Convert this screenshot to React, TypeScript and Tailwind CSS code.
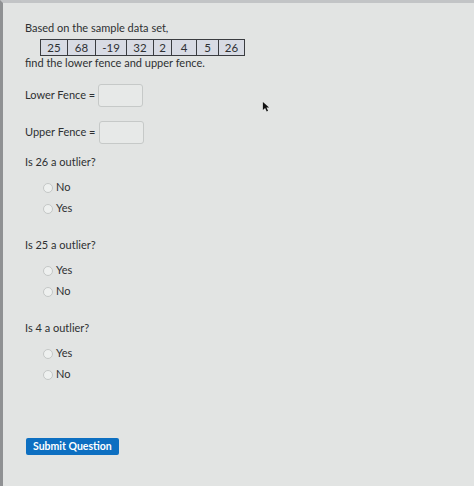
import React from 'react';

const values = ['25', '68', '-19', '32', '2', '4', '5', '26'];
const widths = ['w-[26px]', 'w-[28px]', 'w-[31px]', 'w-[27px]', 'w-[18px]', 'w-[25px]', 'w-[22px]', 'w-[26px]'];

function Radio({ label }: { label: string }) {
  return (
    <div className="flex items-center gap-[3px] h-[21px]">
      <span className="w-[10px] h-[10px] rounded-full border border-[#c4c7c6] bg-[#eef0ef]" />
      <span>{label}</span>
    </div>
  );
}

function Question({ text, options }: { text: string; options: string[] }) {
  return (
    <div>
      <p className="leading-[20px]">{text}</p>
      <div className="pl-[18px] mt-[5px] flex flex-col">
        {options.map((o) => (
          <Radio key={o} label={o} />
        ))}
      </div>
    </div>
  );
}

export default function App() {
  return (
    <div
      className="relative w-[474px] h-[486px] bg-[#e2e4e3] border-l-[3px] border-t-[3px] border-l-[#8f9193] border-t-[#c2c4c6] text-[#2e3032] text-[11px] overflow-hidden"
      style={{ fontFamily: 'Lato, "Open Sans", sans-serif' }}
    >
      <div className="pl-[22px] pt-[15px]">
        <p className="leading-[20px]">Based on the sample data set,</p>
        <div className="ml-[15px] mt-[1px] flex border border-[#3a3c40] bg-[#d8dbe4] h-[17px] w-fit text-[11.5px]">
          {values.map((v, i) => (
            <div
              key={i}
              className={`${widths[i]} flex items-center justify-center leading-none ${i > 0 ? 'border-l border-[#3a3c40]' : ''}`}
            >
              {v}
            </div>
          ))}
        </div>
        <p className="leading-[14px]">find the lower fence and upper fence.</p>

        <div className="mt-[14px] flex items-center gap-[3px]">
          <span>Lower Fence =</span>
          <div className="w-[45px] h-[23px] rounded-[3px] border border-[#c6c9c8] bg-[#e7e9e8]" />
        </div>
        <div className="mt-[14px] flex items-center gap-[3px]">
          <span>Upper Fence =</span>
          <div className="w-[45px] h-[23px] rounded-[3px] border border-[#c6c9c8] bg-[#e7e9e8]" />
        </div>

        <div className="mt-[8px]">
          <Question text="Is 26 a outlier?" options={['No', 'Yes']} />
        </div>
        <div className="mt-[16px]">
          <Question text="Is 25 a outlier?" options={['Yes', 'No']} />
        </div>
        <div className="mt-[16px]">
          <Question text="Is 4 a outlier?" options={['Yes', 'No']} />
        </div>

        <button className="mt-[53px] ml-[1px] px-[7px] h-[17px] rounded-[2px] bg-[#0d6fc1] text-white font-bold text-[10.5px] leading-none">
          Submit Question
        </button>
      </div>

      <svg className="absolute left-[259px] top-[98px]" width="8" height="11" viewBox="0 0 9 12">
        <path d="M1 1 L1 10 L3.5 7.8 L5.3 11.5 L6.8 10.8 L5 7.2 L8 7 Z" fill="#111" />
      </svg>
    </div>
  );
}
